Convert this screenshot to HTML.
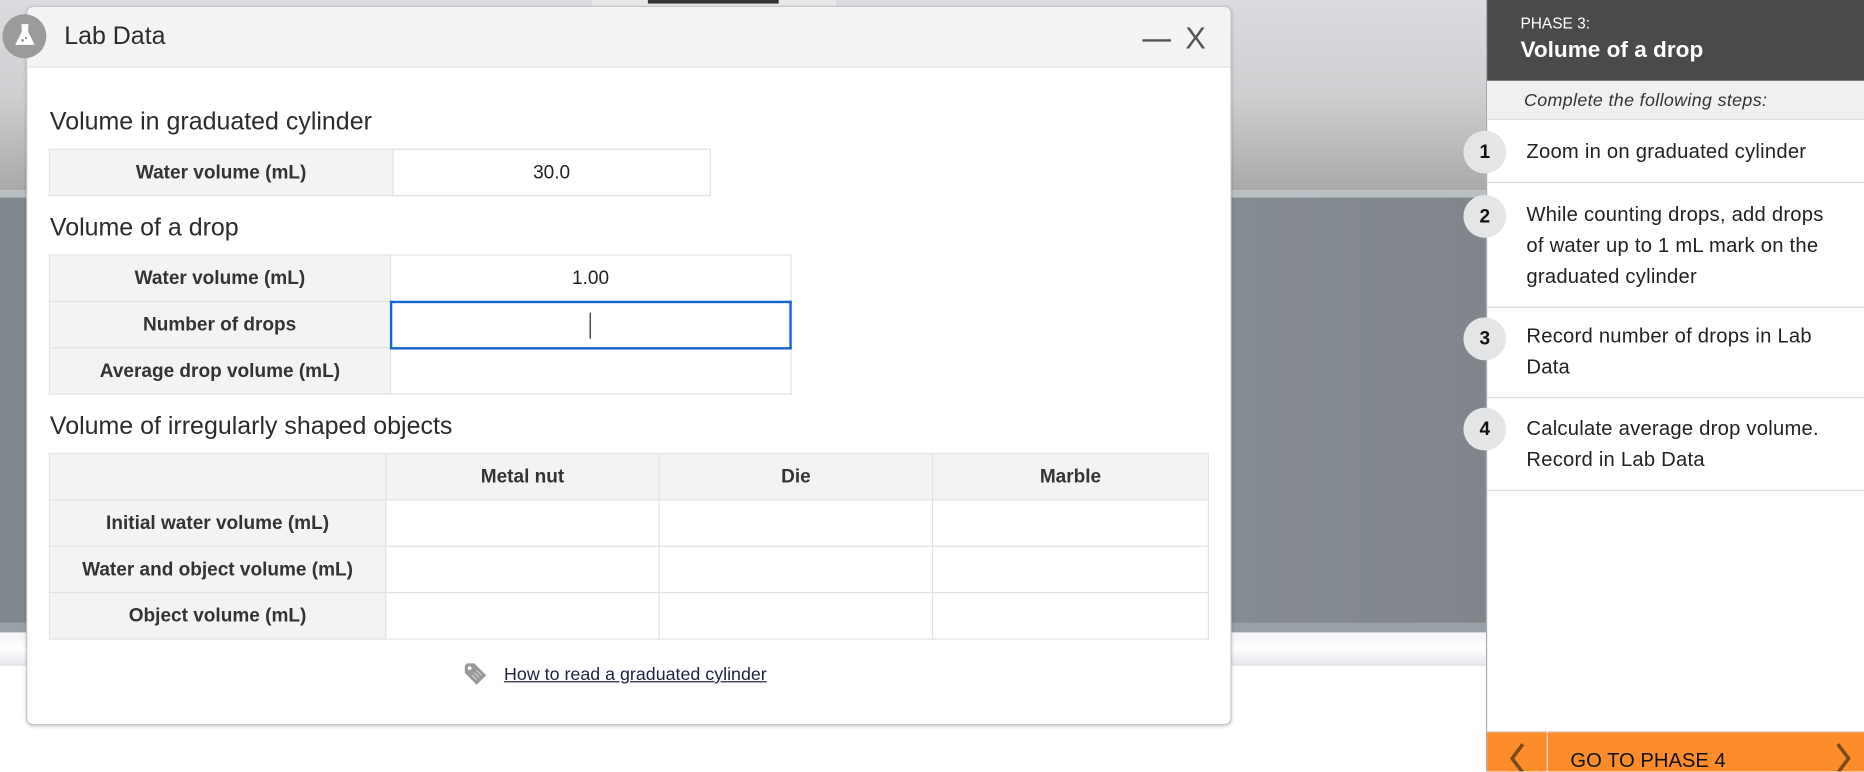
<!DOCTYPE html>
<html><head><meta charset="utf-8"><style>
*{box-sizing:border-box;margin:0;padding:0}
html,body{width:1864px;height:772px;overflow:hidden;background:#fff;font-family:"Liberation Sans",sans-serif}
#s{position:absolute;left:0;top:0;width:1568px;height:649.4px;transform:scale(1.18878);transform-origin:0 0;overflow:hidden}
.a{position:absolute}
.bgtop{left:0;top:0;width:1250px;height:160px;background:linear-gradient(#dcdce0,#cfcfd2 50%,#a9a9aa)}
.stone{left:0;top:160px;width:1250px;height:372px;background:linear-gradient(90deg,#80878d,#90979e 40%,#899096 70%,#80868b);border-top:6px solid #b9c0c4;border-bottom:8px solid #9aa1a6}
.band{left:0;top:532px;width:1250px;height:28px;background:linear-gradient(#f2f3f7,#fff 50%,#e6e8ee);border-bottom:1px solid #ddd}
.dlg{left:22px;top:5px;width:1014px;height:605px;background:#fff;border:1px solid #c8c8c8;border-radius:6px;box-shadow:0 1px 3px rgba(0,0,0,.2)}
.hdr{left:0;top:0;width:1012px;height:51px;background:#f2f3f5;border-bottom:1px solid #dedede;border-radius:6px 6px 0 0}
h2{position:absolute;font-weight:normal;font-size:21px;color:#2b2b2b;left:19px}
table{position:absolute;border-collapse:collapse;font-size:16px;color:#222}
td{border:1px solid #e2e2e2;height:39px;text-align:center;padding:2px 0 0}
td.l{background:#f2f3f5;font-weight:bold;color:#333}
.rp{left:1250px;top:0;width:318px;height:649.4px;background:#fff;border-left:1px solid #aaa}
.step{position:absolute;left:0;width:318px;border-bottom:1px solid #ddd;font-size:17px;color:#222;line-height:26px;padding-left:33px;padding-right:22px;letter-spacing:.2px;white-space:nowrap}
.num{position:absolute;left:-18px;width:36px;height:36px;border-radius:50%;background:#e3e5e7;font-weight:bold;font-size:16px;text-align:center;line-height:38px;color:#111;padding-left:0}
</style></head><body><div id="s">
<div class="a bgtop"></div>
<div class="a" style="left:498px;top:0;width:205px;height:8px;background:#e8e8ea"></div>
<div class="a" style="left:545px;top:0;width:110px;height:3px;background:#333"></div>
<div class="a stone"></div>
<div class="a band"></div>

<div class="a dlg">
 <div class="a hdr"></div>
 <div class="a" style="left:31px;top:13px;font-size:21px;color:#2b2b2b">Lab Data</div>
 <div class="a" style="left:938px;top:27px;width:24px;height:2px;background:#555"></div>
 <div class="a" style="left:974px;top:11px;font-size:26px;color:#555">X</div>
 <h2 style="top:85px">Volume in graduated cylinder</h2>
 <table style="left:18px;top:119px;width:557px"><tr><td class="l" style="width:289px">Water volume (mL)</td><td>30.0</td></tr></table>
 <h2 style="top:174px">Volume of a drop</h2>
 <table style="left:18px;top:208px;width:625px">
  <tr><td class="l" style="width:287px">Water volume (mL)</td><td>1.00</td></tr>
  <tr><td class="l">Number of drops</td><td style="border:2px solid #1463d6"><span style="display:inline-block;width:1px;height:22px;background:#222;vertical-align:middle"></span></td></tr>
  <tr><td class="l">Average drop volume (mL)</td><td></td></tr>
 </table>
 <h2 style="top:341px">Volume of irregularly shaped objects</h2>
 <table style="left:18px;top:375px;width:976px">
  <tr><td class="l" style="width:283px"></td><td class="l" style="width:230px">Metal nut</td><td class="l" style="width:230px">Die</td><td class="l">Marble</td></tr>
  <tr><td class="l">Initial water volume (mL)</td><td></td><td></td><td></td></tr>
  <tr><td class="l">Water and object volume (mL)</td><td></td><td></td><td></td></tr>
  <tr><td class="l">Object volume (mL)</td><td></td><td></td><td></td></tr>
 </table>
 <svg class="a" style="left:366px;top:550px" width="22" height="22" viewBox="0 0 22 22"><path d="M2 4 L2 10 L12 20 L20 12 L10 2 L4 2 Z" fill="#999"/><circle cx="6" cy="6" r="1.6" fill="#fff"/><path d="M10 10l4 4M12 8l4 4M8 12l4 4" stroke="#ccc" stroke-width="1"/></svg>
 <div class="a" style="left:401px;top:553px;font-size:15px;color:#1a2340;text-decoration:underline">How to read a graduated cylinder</div>
</div>
<div class="a" style="left:2px;top:12px;width:37px;height:37px;border-radius:50%;background:#9b9b9b"></div>
<svg class="a" style="left:11px;top:19px" width="20" height="22" viewBox="0 0 20 22"><path d="M7 2h6M8 2v6L3 18h14L12 8V2" fill="#fff" stroke="#fff" stroke-width="1.5"/><circle cx="8" cy="15" r="1.2" fill="#999"/><circle cx="11" cy="13" r="1" fill="#999"/></svg>

<div class="a rp">
 <div class="a" style="left:0;top:0;width:318px;height:68px;background:#4a4a4a"></div>
 <div class="a" style="left:28px;top:12px;font-size:13px;color:#fff">PHASE 3:</div>
 <div class="a" style="left:28px;top:32px;font-size:19px;font-weight:bold;color:#fff">Volume of a drop</div>
 <div class="a" style="left:0;top:68px;width:318px;height:33px;background:#f0f0f0;border-bottom:1px solid #ddd"></div>
 <div class="a" style="left:31px;top:76px;font-size:15px;font-style:italic;color:#333;letter-spacing:.3px">Complete the following steps:</div>
 <div class="step" style="top:101px;height:53px;padding-top:14px">Zoom in on graduated cylinder</div>
 <div class="step" style="top:154px;height:105px;padding-top:14px">While counting drops, add drops<br>of water up to 1 mL mark on the<br>graduated cylinder</div>
 <div class="step" style="top:259px;height:76px;padding-top:11px">Record number of drops in Lab<br>Data</div>
 <div class="step" style="top:335px;height:78px;padding-top:13px">Calculate average drop volume.<br>Record in Lab Data</div>
 <div class="a" style="left:0;top:615px;width:318px;height:35px;background:#fd8c2a;border-top:1px solid #ddd"></div>
 <div class="a" style="left:50px;top:615px;width:1px;height:35px;background:#fdd"></div>
 <div class="a" style="left:70px;top:630px;font-size:17px;color:#111">GO TO PHASE 4</div>
 <svg class="a" style="left:16px;top:624px" width="20" height="26"><path d="M14 2L5 14l9 12" fill="none" stroke="#7a4a1a" stroke-width="3"/></svg>
 <svg class="a" style="left:290px;top:624px" width="20" height="26"><path d="M5 2l9 12-9 12" fill="none" stroke="#7a4a1a" stroke-width="3"/></svg>
</div>
<div class="num a" style="left:1231px;top:110px">1</div>
<div class="num a" style="left:1231px;top:164px">2</div>
<div class="num a" style="left:1231px;top:267px">3</div>
<div class="num a" style="left:1231px;top:343px">4</div>
</div></body></html>
